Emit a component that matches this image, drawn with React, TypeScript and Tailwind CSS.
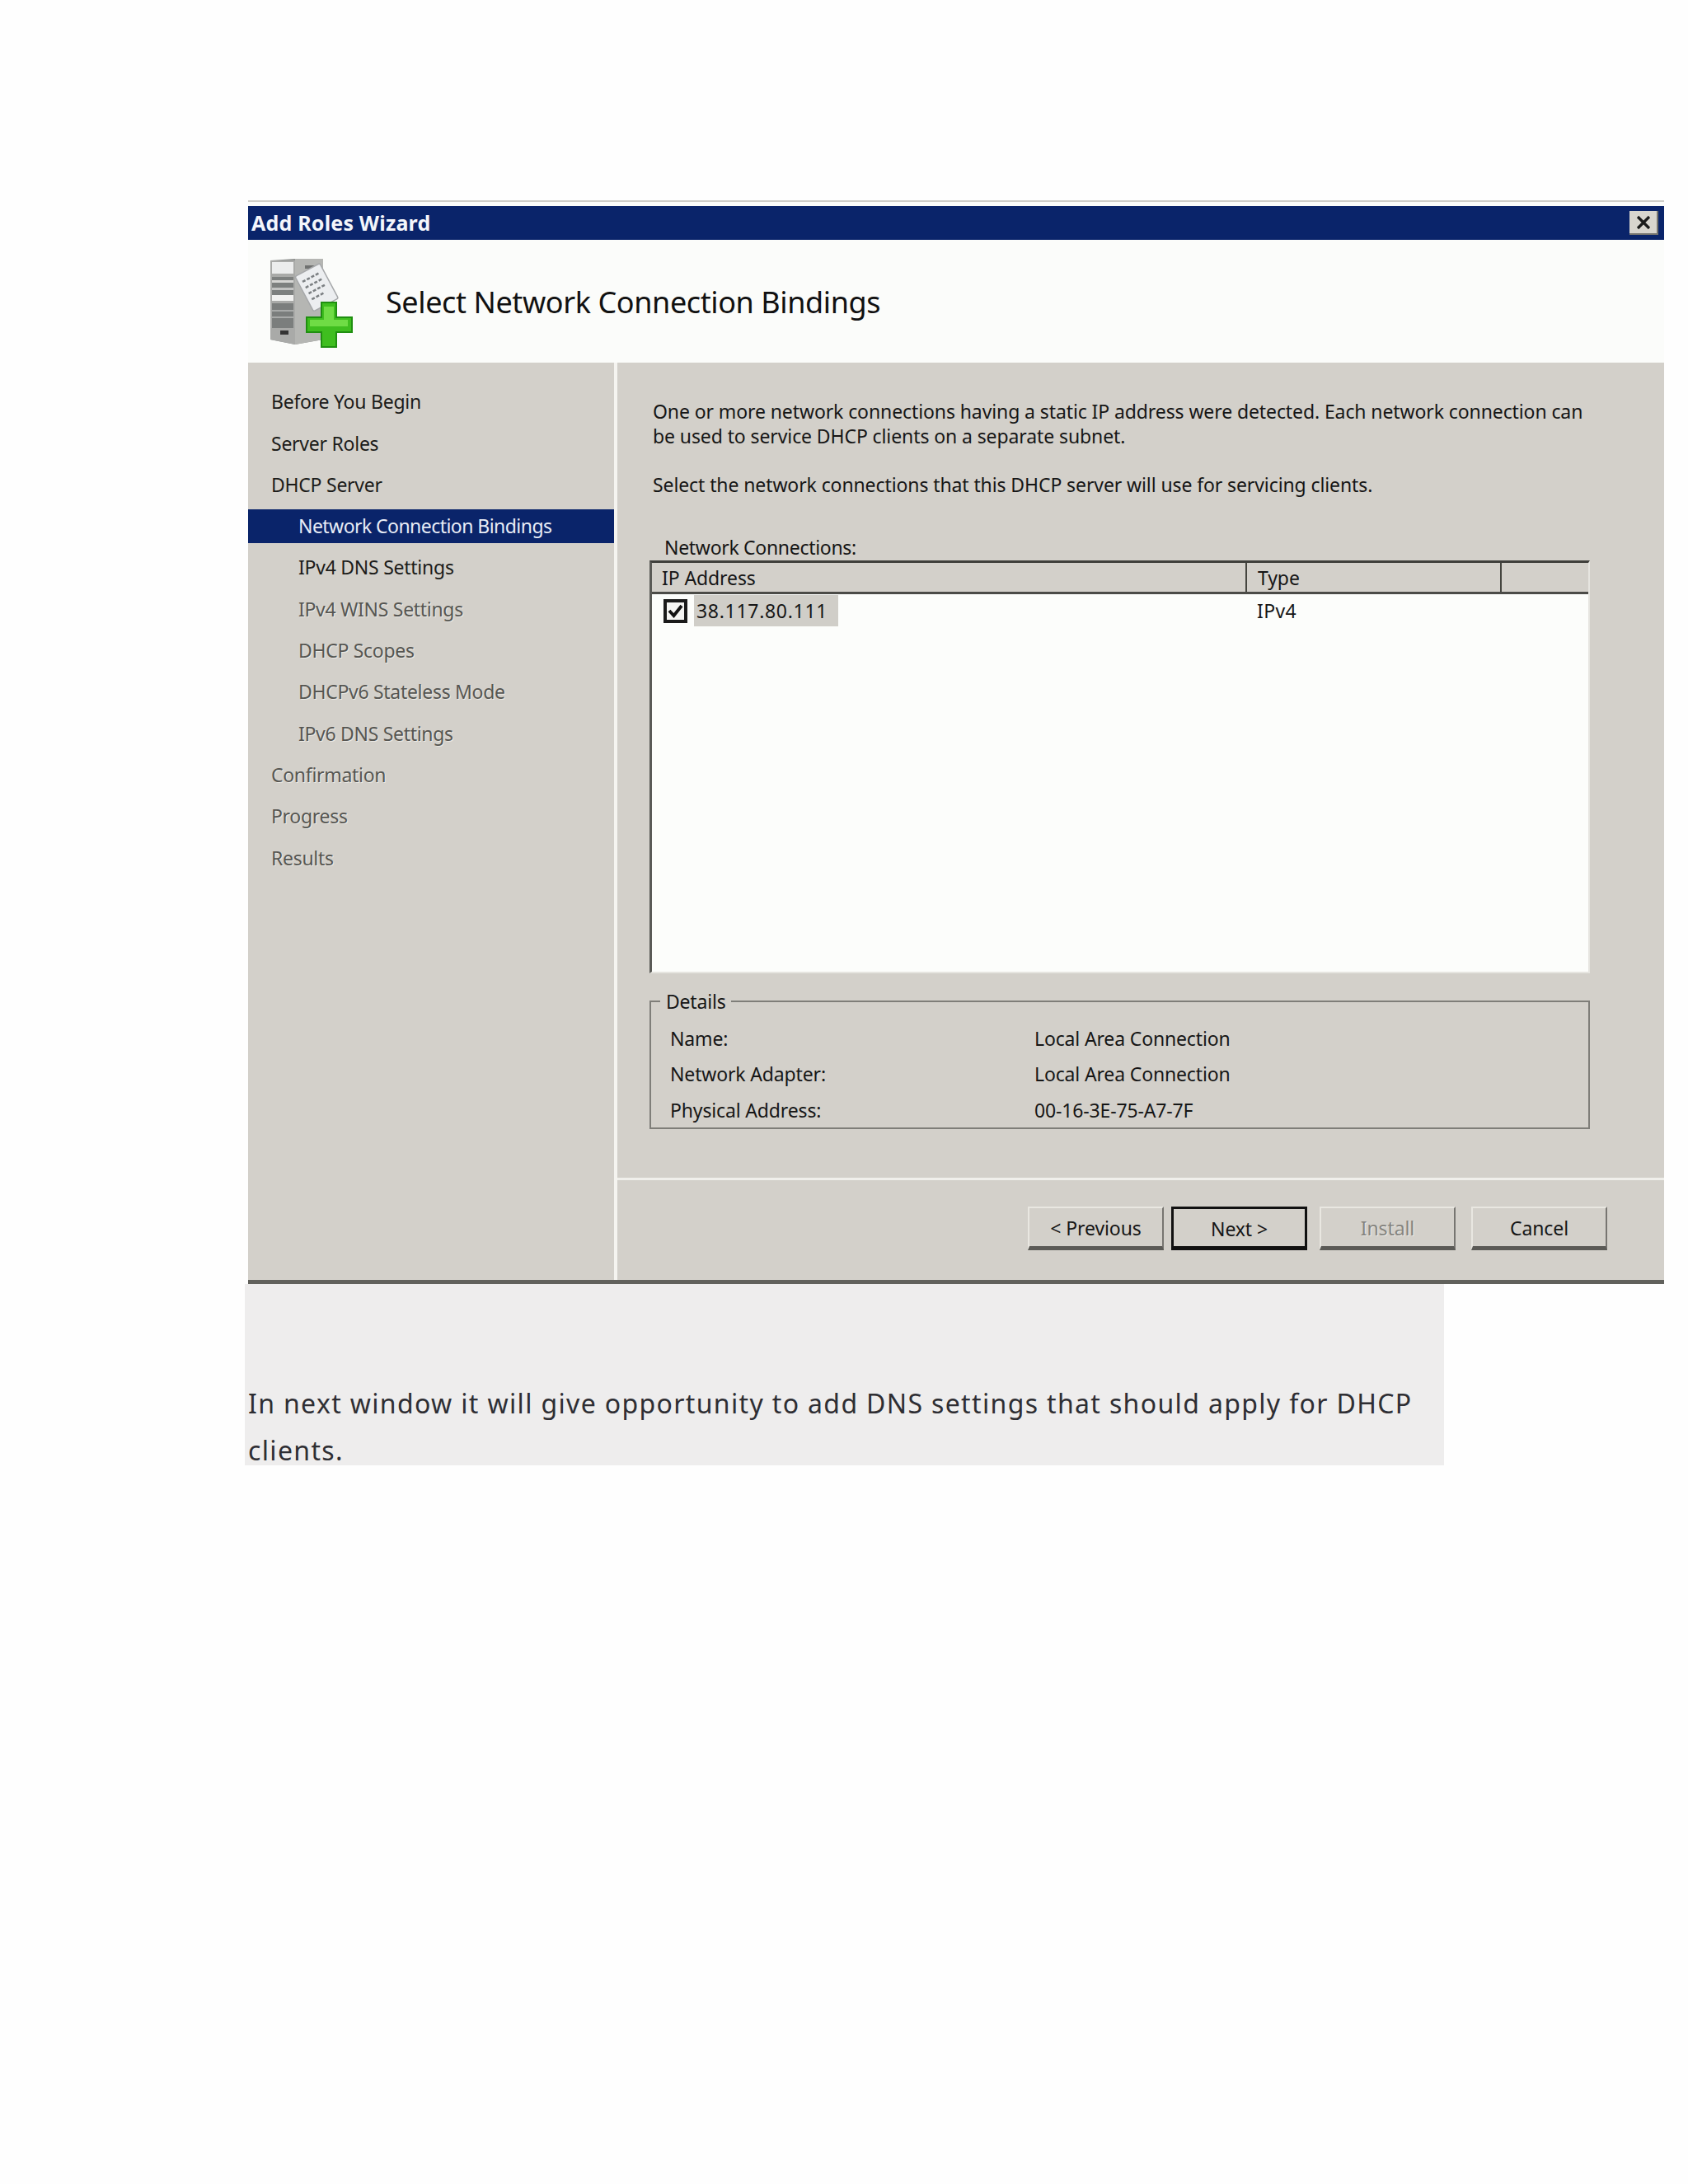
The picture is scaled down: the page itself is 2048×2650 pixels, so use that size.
const font = "font-['Noto_Sans',sans-serif]";

function ServerIcon() {
  return (
    <svg width="100" height="110" viewBox="0 0 100 110" className="shrink-0">
      <path d="M0 4 L30 2 L64 2 L64 100 L30 106 L0 100 Z" fill="#8f918f" />
      <path d="M0 4 L30 4 L30 106 L0 100 Z" fill="#a9aaa8" />
      <rect x="2" y="6" width="26" height="14" fill="#eceded" />
      <rect x="2" y="24" width="26" height="22" fill="#7d807f" />
      <rect x="2" y="28" width="26" height="3" fill="#d6d6d4" />
      <rect x="2" y="37" width="26" height="3" fill="#c2c3c2" />
      <rect x="2" y="46" width="26" height="7" fill="#f2f2f1" />
      <rect x="2" y="56" width="26" height="30" fill="#7b7e7d" />
      <rect x="2" y="64" width="26" height="2" fill="#a8aaa9" />
      <rect x="2" y="72" width="26" height="2" fill="#a8aaa9" />
      <rect x="12" y="89" width="10" height="5" fill="#333" />
      <path d="M30 2 L64 2 L64 100 L30 106 Z" fill="#b5b6b3" />
      <rect x="42" y="10" width="18" height="4" fill="#6f7170" />
      <rect x="54" y="13" width="7" height="8" fill="#333" />
      <g transform="rotate(-28 58 38)">
        <rect x="40" y="12" width="34" height="48" rx="2" fill="#eceef0" stroke="#a6a8aa" strokeWidth="1.5" />
        <path d="M45 22 H68 M45 30 H68 M45 38 H68 M45 46 H62" stroke="#7c8083" strokeWidth="2.5" strokeDasharray="4 2" />
      </g>
      <path d="M62 55 H80 V73 H99 V91 H80 V109 H62 V91 H44 V73 H62 Z" fill="#3fbe1f" stroke="#1f8f10" strokeWidth="2" />
      <path d="M65 60 H77 V76 H94 V84 H48 V76 H65 Z" fill="#6fdc45" />
    </svg>
  );
}

function Step({ label, sub, state }: { label: string; sub?: boolean; state: "done" | "active" | "todo" }) {
  const tone =
    state === "active"
      ? "bg-[#0a246a] text-[#e8ecf6] tracking-[-0.55px]"
      : state === "done"
        ? "text-[#1c1c1a] tracking-[-0.25px]"
        : "text-[#565652] tracking-[-0.3px] [text-shadow:1px_1px_0_#eceae5]";
  return (
    <div className={`flex h-[41px] items-center text-[23px] ${sub ? "pl-[61px]" : "pl-[28px]"} ${tone}`}>
      {label}
    </div>
  );
}

function Btn({ label, primary, disabled }: { label: string; primary?: boolean; disabled?: boolean }) {
  const edge = primary
    ? "border-[3px] border-b-[5px] border-[#111]"
    : "border-t-2 border-l-2 border-r-2 border-b-[5px] border-t-[#e9e7e1] border-l-[#e9e7e1] border-r-[#777571] border-b-[#5b5a56]";
  return (
    <div className={`flex h-[53px] w-[165px] items-center justify-center pt-[3px] text-[23px] tracking-[-0.1px] ${edge} ${disabled ? "text-[#85847f] [text-shadow:1px_1px_0_#eceae5]" : "text-[#161616]"}`}>
      {label}
    </div>
  );
}

function Detail({ k, v }: { k: string; v: string }) {
  return (
    <div className="flex h-[43.5px] items-center text-[23px] tracking-[-0.15px] text-[#161616]">
      <div className="w-[442px] shrink-0">{k}</div>
      <div>{v}</div>
    </div>
  );
}

export default function App() {
  return (
    <div className={`h-[2650px] w-[2048px] bg-[#fefefe] pl-[297px] pt-[243px] ${font}`}>
      <div className="ml-[4px] flex h-[1315px] w-[1718px] flex-col border-t-2 border-b-[5px] border-t-[#cfcec9] border-b-[#61615c] bg-[#fbfcfa] pt-[5px]">
        <div className="flex h-[41px] shrink-0 items-center justify-between bg-[#0a246a] pl-[4px] pr-[7px]">
          <span className="text-[25px] font-bold tracking-[0.2px] text-[#f4f6fb]">Add Roles Wizard</span>
          <div className="flex h-[29px] w-[35px] items-center justify-center border-b-2 border-r-2 border-b-[#77756f] border-r-[#77756f] bg-[#d8d5ce]">
            <svg width="20" height="18" viewBox="0 0 20 18">
              <path d="M3 2 L17 16 M17 2 L3 16" stroke="#1a1a1a" strokeWidth="3.2" />
            </svg>
          </div>
        </div>
        <div className="flex h-[149px] shrink-0 items-center pl-[27px] pt-[2px]">
          <ServerIcon />
          <div className="ml-[40px] text-[36px] tracking-[-0.4px] text-[#111]">Select Network Connection Bindings</div>
        </div>
        <div className="flex min-h-0 flex-1 bg-[#d3d0ca]">
          <div className="flex w-[448px] shrink-0 flex-col gap-[9.3px] border-r-[4px] border-r-[#f5f4f0] pt-[27px]">
            <Step label="Before You Begin" state="done" />
            <Step label="Server Roles" state="done" />
            <Step label="DHCP Server" state="done" />
            <Step label="Network Connection Bindings" sub state="active" />
            <Step label="IPv4 DNS Settings" sub state="done" />
            <Step label="IPv4 WINS Settings" sub state="todo" />
            <Step label="DHCP Scopes" sub state="todo" />
            <Step label="DHCPv6 Stateless Mode" sub state="todo" />
            <Step label="IPv6 DNS Settings" sub state="todo" />
            <Step label="Confirmation" state="todo" />
            <Step label="Progress" state="todo" />
            <Step label="Results" state="todo" />
          </div>
          <div className="flex min-w-0 flex-1 flex-col">
            <div className="flex-1 pl-[39px] pr-[90px] pt-[44px] text-[23px] tracking-[-0.1px] text-[#161616]">
              <div className="pl-[4px] leading-[30px]">
                One or more network connections having a static IP address were detected. Each network connection can
                <br />
                be used to service DHCP clients on a separate subnet.
              </div>
              <div className="mt-[29px] pl-[4px] leading-[30px]">
                Select the network connections that this DHCP server will use for servicing clients.
              </div>
              <div className="mt-[46px] h-[31px] pl-[18px] leading-[30px] tracking-[-0.3px]">Network Connections:</div>
              <div className="h-[501px] border-l-[3px] border-t-[3px] border-l-[#5a5a56] border-t-[#3f3f3b] border-r-2 border-r-[#e6e5e0] border-b-2 border-b-[#e6e5e0] bg-[#fcfdfb]">
                <div className="flex h-[38px] border-b-[3px] border-b-[#4b4b47] bg-[#d3d0ca]">
                  <div className="w-[722px] border-r-2 border-r-[#45453f] pl-[12px] leading-[37px]">IP Address</div>
                  <div className="w-[309px] border-r-2 border-r-[#45453f] pl-[13px] leading-[37px]">Type</div>
                </div>
                <div className="flex h-[40px]">
                  <div className="flex w-[722px] items-center pl-[14px]">
                    <div className="flex h-[29px] w-[29px] items-center justify-center border-[4px] border-[#1a1a1a] bg-[#f4f4f2]">
                      <svg width="21" height="19" viewBox="0 0 21 19">
                        <path d="M3 9 L8.5 15 L18 3" fill="none" stroke="#111" strokeWidth="3.8" />
                      </svg>
                    </div>
                    <div className="ml-[8px] flex h-[38px] w-[175px] items-center bg-[#d0cec8] pl-[3px] tracking-[0.7px]">38.117.80.111</div>
                  </div>
                  <div className="flex items-center pl-[12px] tracking-[0.4px]">IPv4</div>
                </div>
              </div>
              <fieldset className="mt-[19px] h-[170px] border-2 border-[#7f7e79] px-[23px]">
                <legend className="ml-[-12px] px-[7px] text-[23px] leading-[30px] tracking-[-0.2px]">Details</legend>
                <div className="pt-[8px]">
                  <Detail k="Name:" v="Local Area Connection" />
                  <Detail k="Network Adapter:" v="Local Area Connection" />
                  <Detail k="Physical Address:" v="00-16-3E-75-A7-7F" />
                </div>
              </fieldset>
            </div>
            <div className="flex h-[124px] shrink-0 justify-end border-t-[3px] border-t-[#f0efeb] pr-[69px] pt-[32px]">
              <Btn label="< Previous" />
              <div className="w-[9px]" />
              <Btn label="Next >" primary />
              <div className="w-[15px]" />
              <Btn label="Install" disabled />
              <div className="w-[19px]" />
              <Btn label="Cancel" />
            </div>
          </div>
        </div>
      </div>
      <div className="h-[220px] w-[1455px] bg-[#eeeded] pl-[4px] pr-[20px] pt-[116px] text-[32px] leading-[57px] tracking-[1.35px] text-[#2e2e33]">
        In next window it will give opportunity to add DNS settings that should apply for DHCP clients.
      </div>
    </div>
  );
}
